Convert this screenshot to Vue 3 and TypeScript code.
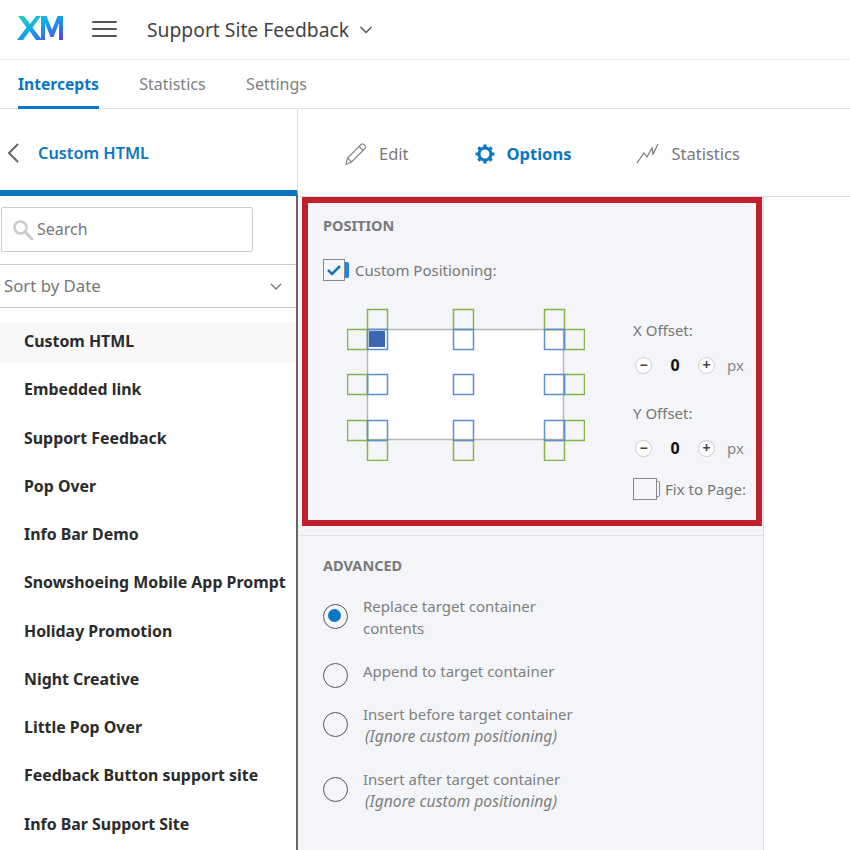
<template>
  <div class="page">
    <header class="topbar">
      <svg class="logo" width="46" height="26" viewBox="0 0 46 26">
        <defs>
          <linearGradient id="xm" x1="0" y1="0" x2="1" y2="1">
            <stop offset="0" stop-color="#2fd8b4" />
            <stop offset="0.45" stop-color="#0fa6ee" />
            <stop offset="1" stop-color="#5b3fe0" />
          </linearGradient>
        </defs>
        <path
          fill="url(#xm)"
          d="M1 1h6l6 8 6-8h5l-8.500 11.500L25 25h-6l-6.500-9L6 25H0l9.500-12.500zM24 1h5.500L35 15l5.500-14H46v24h-4V8l-5.500 14h-3L28 8v17h-4z"
        />
      </svg>
      <svg class="menu" width="26" height="20" viewBox="0 0 26 20">
        <path d="M1 3h23M1 10h23M1 17h23" stroke="#555" stroke-width="2" stroke-linecap="round" />
      </svg>
      <span class="title">Support Site Feedback</span>
      <svg width="14" height="8" viewBox="0 0 14 8" fill="none">
        <path d="M1.500 1 7 6.500 12.500 1" stroke="#555" stroke-width="1.500" />
      </svg>
    </header>

    <nav class="tabs">
      <a v-for="tab in tabs" :key="tab" class="tab" :class="{ 'tab--active': tab === 'Intercepts' }">{{ tab }}</a>
    </nav>

    <div class="main">
      <aside class="sidebar">
        <div class="side-head">
          <svg width="14" height="22" viewBox="0 0 14 22" fill="none">
            <path d="M12 2 3 11l9 9" stroke="#666" stroke-width="2" />
          </svg>
          <span class="side-title">Custom HTML</span>
        </div>
        <div class="side-body">
          <div class="search">
            <svg width="22" height="22" viewBox="0 0 22 22" fill="none">
              <circle cx="8.500" cy="8.500" r="6" stroke="#ccc" stroke-width="2.500" />
              <path d="m13 13 7 7" stroke="#ccc" stroke-width="3" stroke-linecap="round" />
            </svg>
            <span class="search-text">Search</span>
          </div>
          <div class="sort">
            <span class="sort-text">Sort by Date</span>
            <svg width="12" height="7" viewBox="0 0 12 7" fill="none">
              <path d="M1 1l5 5 5-5" stroke="#777" stroke-width="1.300" />
            </svg>
          </div>
          <ul class="list">
            <li v-for="(item, i) in items" :key="item" class="item" :class="{ 'item--active': i === 0 }">{{ item }}</li>
          </ul>
        </div>
      </aside>

      <section class="content">
        <div class="subnav">
          <div class="subtab subtab--edit">
            <svg width="24" height="24" viewBox="0 0 24 24" fill="none">
              <path d="M2 22.500 3.500 16 17 2.500a2 2 0 0 1 2.800 0l1.200 1.200a2 2 0 0 1 0 2.800L7.500 20zM3.500 16l4 4M15 4.500l4.500 4.500" stroke="#888" stroke-width="1.200" />
            </svg>
            <span>Edit</span>
          </div>
          <div class="subtab subtab--options">
            <svg width="20" height="20" viewBox="0 0 20 20" fill="none">
              <circle cx="10" cy="10" r="6" stroke="#0b76c4" stroke-width="3" />
              <path
                d="M10 0.500v4M10 15.500v4M0.500 10h4M15.500 10h4M3.300 3.300l2.800 2.800M13.900 13.900l2.800 2.800M3.300 16.700l2.800-2.800M13.900 6.100l2.800-2.800"
                stroke="#0b76c4"
                stroke-width="3.200"
              />
            </svg>
            <span>Options</span>
          </div>
          <div class="subtab subtab--stats">
            <svg width="24" height="22" viewBox="0 0 24 22" fill="none">
              <path d="M1 20 8 10l3 4 5-9 1 6 5-10" stroke="#777" stroke-width="1.200" />
            </svg>
            <span>Statistics</span>
          </div>
        </div>

        <div class="panel">
          <div class="position">
            <h3 class="heading">POSITION</h3>
            <div class="check-row">
              <span class="checkbox">
                <svg width="16" height="14" viewBox="0 0 16 14" fill="none">
                  <path d="M2 7l4 4 8-8" stroke="#0b76c4" stroke-width="2.500" />
                </svg>
              </span>
              <span class="sliver"></span>
              <span class="check-label">Custom Positioning:</span>
            </div>
            <div class="position-body">
              <svg class="grid" width="238" height="153" viewBox="0 0 238 153" fill="none">
                <rect x="20.500" y="21.500" width="196" height="110" fill="#fff" stroke="#b8b8b8" stroke-width="1.500" />
                <rect
                  v-for="(g, i) in greenSquares"
                  :key="'g' + i"
                  :x="g[0] + 0.5"
                  :y="g[1] + 0.5"
                  width="20"
                  height="20"
                  stroke="#84b548"
                  stroke-width="1.500"
                />
                <rect
                  v-for="(b, i) in blueSquares"
                  :key="'b' + i"
                  :x="b[0] + 0.5"
                  :y="b[1] + 0.5"
                  width="20"
                  height="20"
                  stroke="#5f8dd3"
                  stroke-width="1.500"
                />
                <rect x="22" y="23" width="16" height="16" fill="#3a66b5" />
              </svg>
              <div class="offsets">
                <div v-for="axis in ['X', 'Y']" :key="axis" class="offset">
                  <div class="offset-label">{{ axis }} Offset:</div>
                  <div class="stepper">
                    <span class="round">&#8722;</span>
                    <b class="value">0</b>
                    <span class="round">+</span>
                    <span class="unit">px</span>
                  </div>
                </div>
                <div class="fix">
                  <span class="fix-box"></span>
                  <span class="fix-sliver"></span>
                  <span class="fix-label">Fix to Page:</span>
                </div>
              </div>
            </div>
          </div>

          <div class="advanced">
            <h3 class="heading">ADVANCED</h3>
            <div class="radio-list">
              <div v-for="opt in options" :key="opt.label" class="radio-row">
                <span class="radio" :class="{ 'radio--on': opt.on, 'radio--single': opt.single }"></span>
                <div class="radio-text">
                  {{ opt.label }}
                  <em v-if="opt.note">(Ignore custom positioning)</em>
                </div>
              </div>
            </div>
          </div>
        </div>
      </section>
    </div>
  </div>
</template>

<script setup lang="ts">
interface Option {
  label: string
  on?: boolean
  note?: boolean
  single?: boolean
}

const tabs = ['Intercepts', 'Statistics', 'Settings']

const items = [
  'Custom HTML',
  'Embedded link',
  'Support Feedback',
  'Pop Over',
  'Info Bar Demo',
  'Snowshoeing Mobile App Prompt',
  'Holiday Promotion',
  'Night Creative',
  'Little Pop Over',
  'Feedback Button support site',
  'Info Bar Support Site'
]

const options: Option[] = [
  { label: 'Replace target container contents', on: true },
  { label: 'Append to target container', single: true },
  { label: 'Insert before target container', note: true },
  { label: 'Insert after target container', note: true }
]

const blueSquares = [
  [20, 21], [106, 21], [197, 21],
  [20, 66], [106, 66], [197, 66],
  [20, 112], [106, 112], [197, 112]
]

const greenSquares = [
  [20, 1], [0, 21],
  [106, 1],
  [197, 1], [217, 21],
  [0, 66], [217, 66],
  [0, 112], [20, 132],
  [106, 132],
  [217, 112], [197, 132]
]
</script>

<style>
html,
body {
  margin: 0;
  background: #fff;
  overflow: hidden;
}
</style>

<style scoped>
.page {
  width: 850px;
  height: 850px;
  overflow: hidden;
  font-family: 'Noto Sans', 'Open Sans', sans-serif;
  color: #6b6b6b;
}

.topbar {
  box-sizing: border-box;
  height: 60px;
  display: flex;
  align-items: center;
  padding-left: 17px;
  border-bottom: 1px solid #e8e8e8;
}

.logo {
  margin-right: 29px;
  margin-top: -3px;
}

.menu {
  margin-right: 29px;
  margin-top: -2px;
}

.title {
  font-size: 19.300px;
  color: #444;
  margin-right: 10px;
  margin-top: -1px;
}

.tabs {
  box-sizing: border-box;
  height: 49px;
  display: flex;
  gap: 40.500px;
  padding-left: 18px;
  border-bottom: 1px solid #e3e3e3;
}

.tab {
  font-size: 16px;
  line-height: 48px;
  color: #808080;
  height: 49px;
  box-sizing: border-box;
}

.tab--active {
  color: #0b76c4;
  font-size: 15.600px;
  font-weight: 700;
  border-bottom: 3px solid #0b76d4;
}

.main {
  display: grid;
  grid-template-columns: 298px 1fr;
}

.side-head {
  box-sizing: border-box;
  height: 87px;
  display: flex;
  align-items: center;
  gap: 18px;
  padding: 7px 0 0 6px;
  border-bottom: 6px solid #0b76c0;
  border-right: 1px solid #ddd;
}

.side-title {
  color: #0b76c4;
  font-size: 16.300px;
  font-weight: 600;
}

.side-body {
  border-right: 2px solid #666;
  height: 660px;
  box-sizing: border-box;
  padding-top: 11px;
}

.search {
  box-sizing: border-box;
  width: 252px;
  height: 45px;
  margin-left: 1px;
  display: flex;
  align-items: center;
  gap: 3px;
  padding-left: 10px;
  border: 1px solid #ccc;
  border-radius: 2px;
  font-size: 16px;
  color: #777;
}

.search-text,
.sort-text {
  margin-top: -2px;
}

.sort {
  box-sizing: border-box;
  height: 44px;
  margin-top: 12px;
  display: flex;
  align-items: center;
  justify-content: space-between;
  padding: 0 14px 0 4px;
  border-top: 1px solid #ccc;
  border-bottom: 1px solid #ccc;
  font-size: 16.800px;
  color: #777;
}

.list {
  list-style: none;
  margin: 15px 0 0;
  padding: 0;
}

.item {
  box-sizing: border-box;
  height: 40px;
  margin-bottom: 8.250px;
  padding-left: 24px;
  line-height: 36px;
  font-size: 15.900px;
  font-weight: 700;
  color: #2b2b2b;
  white-space: nowrap;
}

.item--active {
  background: #f7f7f7;
}

.subnav {
  box-sizing: border-box;
  height: 88px;
  display: flex;
  align-items: center;
  padding: 2px 0 0 46px;
  border-bottom: 1px solid #ddd;
  font-size: 16.500px;
  color: #777;
}

.subtab {
  display: flex;
  align-items: center;
}

.subtab--edit {
  gap: 11px;
  margin-right: 66px;
}

.subtab--options {
  gap: 12px;
  color: #0b76c4;
  font-weight: 700;
  margin-right: 65px;
}

.subtab--stats {
  gap: 11px;
}

.panel {
  box-sizing: border-box;
  width: 466px;
  height: 654px;
  background: #f3f5f9;
  border-right: 1px solid #ddd;
  padding-left: 4px;
}

.position {
  box-sizing: border-box;
  width: 460px;
  height: 329px;
  border: 6px solid #c1202f;
  padding: 12px 0 0 15px;
}

.heading {
  margin: 0;
  font-size: 14.500px;
  line-height: 20px;
  font-weight: 700;
  color: #7a7a7a;
}

.check-row {
  display: flex;
  align-items: center;
  margin-top: 24px;
  height: 22px;
  font-size: 15px;
}

.checkbox {
  box-sizing: border-box;
  width: 22px;
  height: 22px;
  border: 1.500px solid #888;
  display: flex;
  align-items: center;
  justify-content: center;
}

.sliver {
  width: 4px;
  height: 16px;
  background: #1a84f0;
  border-radius: 0 2px 2px 0;
}

.check-label {
  margin-left: 6px;
  color: #777;
}

.position-body {
  display: flex;
  margin-top: 27px;
  margin-left: 24px;
}

.grid {
  flex: none;
}

.offsets {
  margin-left: 48px;
  padding-top: 12px;
}

.offset {
  height: 83px;
}

.offset-label {
  font-size: 15px;
  line-height: 20px;
  color: #777;
}

.stepper {
  display: flex;
  align-items: center;
  margin-top: 15px;
  height: 20px;
}

.round {
  box-sizing: border-box;
  width: 17px;
  height: 17px;
  margin-left: 2px;
  border-radius: 50%;
  background: #fff;
  border: 1px solid #ccc;
  font-size: 14px;
  font-weight: 700;
  line-height: 14px;
  text-align: center;
  color: #444;
}

.value {
  box-sizing: border-box;
  width: 44px;
  padding-left: 2px;
  text-align: center;
  font-size: 16px;
  color: #111;
}

.unit {
  margin-left: 12px;
  font-size: 15px;
  color: #888;
}

.fix {
  display: flex;
  align-items: center;
  margin-top: -9px;
  height: 24px;
  font-size: 15px;
}

.fix-box {
  box-sizing: border-box;
  width: 24px;
  height: 22px;
  border: 1px solid #888;
}

.fix-sliver {
  box-sizing: border-box;
  width: 3px;
  height: 16px;
  border: 1px solid #888;
  border-left: 0;
  border-radius: 0 2px 2px 0;
}

.fix-label {
  margin-left: 5px;
  color: #777;
  white-space: nowrap;
}

.advanced {
  margin-top: 9px;
  margin-left: -4px;
  padding: 19px 0 0 25px;
  border-top: 1px solid #e3e3e3;
}

.advanced .heading {
  margin-bottom: 20px;
}

.radio-list {
  display: flex;
  flex-direction: column;
  gap: 21px;
}

.radio-row {
  display: flex;
  align-items: flex-start;
  gap: 15px;
}

.radio {
  box-sizing: border-box;
  flex: none;
  width: 25px;
  height: 25px;
  margin-top: 9px;
  border-radius: 50%;
  border: 1.700px solid #555;
  position: relative;
}

.radio--single {
  margin-top: 3px;
  margin-bottom: -6px;
}

.radio--on::after {
  content: '';
  position: absolute;
  left: 4.300px;
  top: 4.300px;
  width: 13px;
  height: 13px;
  border-radius: 50%;
  background: #0b76c4;
}

.radio-text {
  width: 215px;
  font-size: 15px;
  line-height: 22px;
  color: #808080;
}

.radio-text em {
  display: block;
  padding-left: 2px;
  font-size: 15.700px;
}
</style>
